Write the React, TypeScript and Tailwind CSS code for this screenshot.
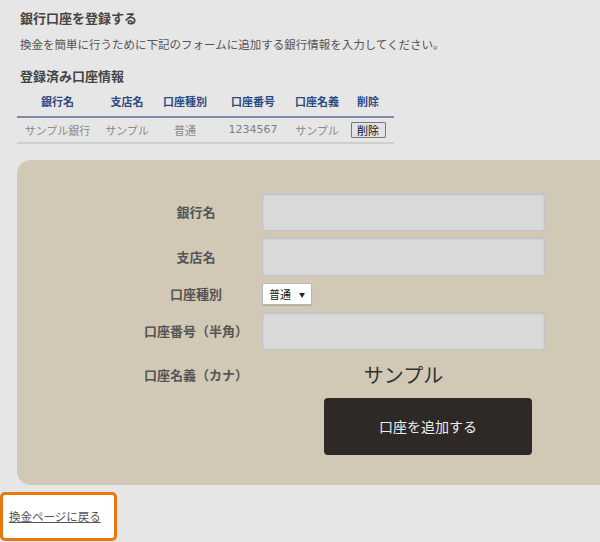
export default function App() {
  const font = { fontFamily: '"Noto Sans CJK JP", "Noto Sans", sans-serif' };
  return (
    <div className="h-[542px] w-[600px] overflow-hidden bg-[#e6e6e6] text-[#444]" style={font}>
      <div className="pl-[20px] pt-[9px]">
        <h1 className="text-[13px] font-bold leading-[18px] text-[#444]">銀行口座を登録する</h1>
        <p className="mt-[9px] text-[11.5px] leading-[16px] text-[#555]">
          換金を簡単に行うために下記のフォームに追加する銀行情報を入力してください。
        </p>
        <h2 className="mt-[15px] text-[13px] font-bold leading-[18px] text-[#444]">登録済み口座情報</h2>
      </div>

      <table className="ml-[17px] mt-[2px] w-[377px] table-fixed border-collapse text-[11px]">
        <colgroup>
          <col className="w-[81px]" />
          <col className="w-[58px]" />
          <col className="w-[58px]" />
          <col className="w-[78px]" />
          <col className="w-[50px]" />
          <col className="w-[52px]" />
        </colgroup>
        <thead>
          <tr className="h-[30px] border-b-2 border-[#7d89a6] font-bold text-[#2c4a84]">
            <th className="text-center font-bold">銀行名</th>
            <th className="text-center font-bold">支店名</th>
            <th className="text-center font-bold">口座種別</th>
            <th className="text-center font-bold">口座番号</th>
            <th className="text-center font-bold">口座名義</th>
            <th className="text-center font-bold">削除</th>
          </tr>
        </thead>
        <tbody>
          <tr className="h-[26px] border-b-2 border-[#cfcfcf] text-[#8a8a8a]">
            <td className="whitespace-nowrap text-center">サンプル銀行</td>
            <td className="text-center">サンプル</td>
            <td className="text-center">普通</td>
            <td className="text-center font-['DejaVu_Sans'] text-[11px] text-[#7f7f7f]">1234567</td>
            <td className="whitespace-nowrap text-center">サンプル</td>
            <td className="text-center">
              <button className="h-[16px] w-[35px] rounded-[1px] border border-[#777] bg-[#e2e2e2] text-[11px] leading-[14px] text-[#111]">
                削除
              </button>
            </td>
          </tr>
        </tbody>
      </table>

      <div className="ml-[17px] mt-[16px] w-[620px] rounded-[14px] bg-[#d1c9b6] pb-[30px] pl-[121px] pt-[33px]">
        <div className="flex h-[38px] items-center">
          <Label text="銀行名" />
          <TextBox />
        </div>
        <div className="mt-[6px] flex h-[39px] items-center">
          <Label text="支店名" />
          <TextBox />
        </div>
        <div className="mt-[7px] flex h-[22px] items-center">
          <Label text="口座種別" />
          <div className="flex h-[22px] w-[50px] items-center justify-between rounded-[2px] border border-[#b8b8b8] bg-white pl-[6px] pr-[6px] text-[11px] text-[#222] shadow-[0_1px_1px_rgba(0,0,0,0.15)]">
            <span>普通</span>
            <span className="text-[6px]">▼</span>
          </div>
        </div>
        <div className="mt-[7px] flex h-[38px] items-center">
          <Label text="口座番号（半角）" />
          <TextBox />
        </div>
        <div className="mt-[10px] flex h-[30px] items-center">
          <Label text="口座名義（カナ）" />
          <div className="w-[283px] text-center text-[20px] leading-[30px] text-[#333]">サンプル</div>
        </div>
        <div className="mt-[8px] flex">
          <div className="w-[124px]" />
          <button className="ml-[62px] h-[57px] w-[208px] rounded-[4px] bg-[#2e2826] text-[14px] text-[#ececec]">
            口座を追加する
          </button>
        </div>
      </div>

      <div className="mt-[7px] flex h-[49px] w-[117px] items-center rounded-[5px] border-[3px] border-[#e8780e] bg-white pl-[6px]">
        <a href="#" className="text-[11.5px] text-[#555] underline">
          換金ページに戻る
        </a>
      </div>
    </div>
  );
}

function Label({ text }: { text: string }) {
  return (
    <div className="mr-[8px] w-[116px] whitespace-nowrap text-center text-[13px] font-bold text-[#555]">{text}</div>
  );
}

function TextBox() {
  return (
    <input
      type="text"
      className="h-full w-[283px] rounded-[2px] border border-[#c4c4c4] bg-[#d9d9d9] shadow-[inset_0_1px_2px_rgba(0,0,0,0.12)] outline-none"
    />
  );
}
